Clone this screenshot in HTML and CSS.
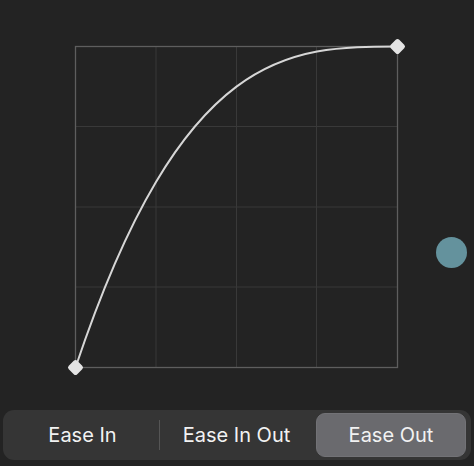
FILE: index.html
```html
<!DOCTYPE html>
<html lang="en">
<head>
    <meta charset="UTF-8">
    <title>Easing Curve</title>
    <link rel="stylesheet" href="styles.css">
</head>
<body>

    <div class="stage">
        <svg class="chart" width="340" height="340" viewBox="0 0 340 340">
            <g class="grid">
                <line x1="90" y1="9.5" x2="90" y2="330.5"/>
                <line x1="170.5" y1="9.5" x2="170.5" y2="330.5"/>
                <line x1="250.5" y1="9.5" x2="250.5" y2="330.5"/>
                <line x1="9.5" y1="89.5" x2="331.5" y2="89.5"/>
                <line x1="9.5" y1="170" x2="331.5" y2="170"/>
                <line x1="9.5" y1="250" x2="331.5" y2="250"/>
            </g>
            <rect class="frame" x="9.5" y="9.5" width="322" height="321"/>
            <path class="curve" d="M9.5 330.5 C 116.8 9.5, 224.2 9.5, 331.5 9.5"/>
            <rect class="handle" x="3.5" y="324.5" width="12" height="12" rx="2.5" transform="rotate(45 9.5 330.5)"/>
            <rect class="handle" x="325.5" y="3.5" width="12" height="12" rx="2.5" transform="rotate(45 331.5 9.5)"/>
        </svg>
        <div class="ball"></div>
    </div>

    <div class="segmented">
        <button class="segment">Ease In</button>
        <span class="divider"></span>
        <button class="segment">Ease In Out</button>
        <button class="segment active">Ease Out</button>
    </div>

</body>
</html>
```

FILE: styles.css
```css
body {
    background: #232323;
    margin: 0;
    font-family: Inter, "Liberation Sans", sans-serif;
    overflow: hidden;
}

.stage {
    display: flex;
    align-items: flex-start;
    height: 410px;
    box-sizing: border-box;
    padding: 37px 0 0 66px;
}

.chart {
    display: block;
    flex: none;
}

.grid line {
    stroke: #393939;
    stroke-width: 1;
}

.frame {
    fill: none;
    stroke: #5e5e5e;
    stroke-width: 1.3;
}

.curve {
    fill: none;
    stroke: #d6d6d6;
    stroke-width: 2;
}

.handle {
    fill: #e4e4e4;
}

.ball {
    width: 31px;
    height: 31px;
    border-radius: 50%;
    background: #64929d;
    margin: 200px 0 0 30px;
    flex: none;
}

.segmented {
    display: flex;
    align-items: center;
    height: 50px;
    margin: 0 3px;
    padding: 3px 5px 3px 3px;
    box-sizing: border-box;
    background: #353535;
    border-radius: 11px;
}

.segment {
    flex: 1;
    height: 100%;
    border: none;
    background: none;
    color: #f2f2f2;
    font-family: inherit;
    font-size: 20px;
    border-radius: 9px;
    padding: 0;
}

.segment.active {
    flex: none;
    width: 150px;
    margin-left: 3px;
    background: #6a6a6e;
    border: 1px solid #727276;
}

.divider {
    width: 1px;
    height: 30px;
    background: #555;
    flex: none;
}
```
